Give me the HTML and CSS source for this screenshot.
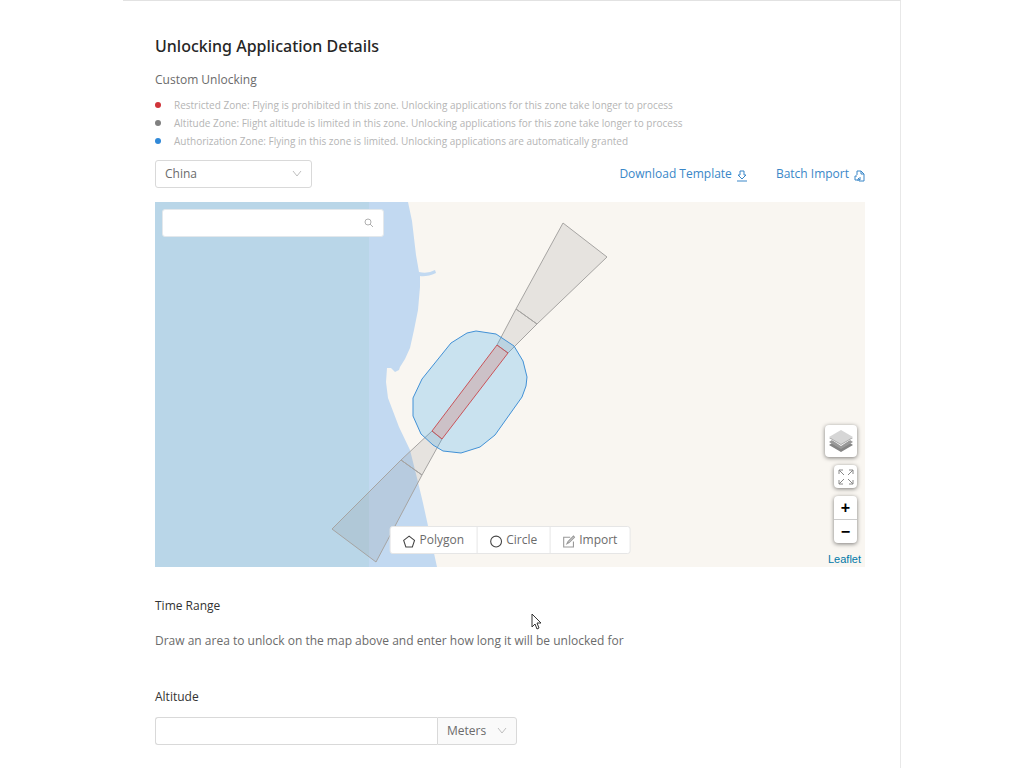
FILE: index.html
```html
<!DOCTYPE html>
<html lang="en">
<head>
  <meta charset="UTF-8" />
  <title>Unlocking Application Details</title>
  <link rel="stylesheet" href="styles.css">
</head>
<body>
  <main class="panel">
    <h1 class="title">Unlocking Application Details</h1>
    <h2 class="subtitle">Custom Unlocking</h2>

    <ul class="zones">
      <li class="zone restricted">Restricted Zone: Flying is prohibited in this zone. Unlocking applications for this zone take longer to process</li>
      <li class="zone altitude">Altitude Zone: Flight altitude is limited in this zone. Unlocking applications for this zone take longer to process</li>
      <li class="zone authorization">Authorization Zone: Flying in this zone is limited. Unlocking applications are automatically granted</li>
    </ul>

    <div class="toolbar">
      <div class="select-box country">
        <select aria-label="Country">
          <option>China</option>
        </select>
        <svg class="chevron" viewBox="0 0 10 8"><path d="M1 1l4 5 4-5" /></svg>
      </div>
      <div class="links">
        <a href="#">Download Template
          <svg class="link-icon" viewBox="0 0 12 12"><path d="M4 1h4v4h2L6 9 2 5h2zM1 11h10" /></svg>
        </a>
        <a href="#">Batch Import
          <svg class="link-icon" viewBox="0 0 12 12"><path d="M4 5V1h4l3 3v7H6M8 1v3h3M4 6H2v4h4M5 8l2 2M7 7v3H4" /></svg>
        </a>
      </div>
    </div>

    <div class="map">
      <svg class="map-canvas" viewBox="0 0 710 365" preserveAspectRatio="xMinYMin slice">
        <rect class="land" width="710" height="365" />
        <path class="shore" d="M0 0H253L257 19 261 53 264 70Q273 72 280 68L281 71Q272 75 265 74L265 85 263 108 259 128 255 146 250 157 245 165 244 168 240 170 236 166 232 166 231 180 233 196 244 225 255 248 262 276 268 301 282 365H0z" />
        <rect class="sea" width="214" height="365" />
        <g class="gray-zone">
          <path d="M408 21L452 55 382 122 361 107z" />
          <path d="M361 107L382 122 353 151 342 143z" />
          <path d="M277 229L287 237 267 273 246 258z" />
          <path d="M246 258L267 273 221 360 177 327z" />
        </g>
        <path class="blue-zone" d="M321 129L341 132 359 144 368 159 372 175 371 184 367 195 340 233 325 245 306 251 288 249 278 243 266 232 258 214 258 196 267 177 296 141 312 131z" />
        <path class="red-zone" d="M342 143L353 151 287 237 277 229z" />
      </svg>

      <div class="search">
        <input type="text" aria-label="Search location">
        <svg class="search-icon" viewBox="0 0 10 10"><circle cx="4" cy="4" r="3" /><path d="M6 6l3 3" /></svg>
      </div>

      <div class="draw-tools">
        <button type="button">
          <svg class="tool-icon" viewBox="0 0 12 12"><path d="M6 1l5 4-2 6H3L1 5z" /></svg>
          Polygon
        </button>
        <button type="button">
          <svg class="tool-icon" viewBox="0 0 12 12"><circle cx="6" cy="6" r="5" /></svg>
          Circle
        </button>
        <button type="button">
          <svg class="tool-icon muted" viewBox="0 0 12 12"><path d="M7 2H1v9h9V6M4 8l1-2 5-5 1 1-5 5z" /></svg>
          Import
        </button>
      </div>

      <div class="map-controls">
        <button type="button" class="control layers" aria-label="Layers">
          <svg viewBox="0 0 26 26">
            <path fill="#858585" d="M1 17l12 7 12-7-3-2-9 5-9-5z" />
            <path fill="#fff" d="M1 13l12 7 12-7-3-1-9 5-9-5z" />
            <path fill="#999" d="M1 14l12 7 12-7-3-2-9 5-9-5z" />
            <path fill="#fff" d="M1 10l12 8 12-8z" />
            <path fill="#aaa" d="M1 10l12 7 12-7-3-1-9 5-9-5z" />
            <path fill="#d6d6d6" d="M13 2l12 7-12 7L1 9z" />
          </svg>
        </button>
        <button type="button" class="control fullscreen" aria-label="Full screen">
          <svg viewBox="0 0 16 16"><path d="M6 6L1 1M1 5V1h4M10 6l5-5M11 1h4v4M6 10l-5 5M1 11v4h4M10 10l5 5M15 11v4h-4" /></svg>
        </button>
        <div class="control zoom">
          <button type="button">+</button>
          <button type="button">−</button>
        </div>
        <a class="leaflet" href="#">Leaflet</a>
      </div>
    </div>

    <section class="time-range">
      <h3 class="label">Time Range</h3>
      <p class="hint">Draw an area to unlock on the map above and enter how long it will be unlocked for</p>
      <svg class="cursor" viewBox="0 0 12 18"><path d="M1 1v13l3-3 2 5 2-1-2-5h4z" /></svg>
    </section>

    <section>
      <label class="label" for="altitude">Altitude</label>
      <div class="input-group">
        <input type="text" id="altitude">
        <div class="select-box unit">
          <select aria-label="Altitude unit">
            <option>Meters</option>
          </select>
          <svg class="chevron" viewBox="0 0 10 8"><path d="M1 1l4 5 4-5" /></svg>
        </div>
      </div>
    </section>
  </main>
</body>
</html>
```

FILE: styles.css
```css
* {
  box-sizing: border-box;
}

body {
  margin: 0;
  background-color: #fff;
  color: #6b6b6b;
  font-family: "Segoe UI", "Open Sans", sans-serif;
  font-size: 12px;
  line-height: 18px;
}

button, input, select {
  font: inherit;
  color: inherit;
}

svg {
  display: block;
  fill: none;
  stroke-width: 1;
}

.panel {
  max-width: 778px;
  min-height: 100vh;
  margin: 0 auto;
  padding: 33px 35px 22px 32px;
  border-top: 1px solid #e2e2e2;
  border-right: 1px solid #e8e8e8;
}

.title {
  margin: 0 0 13px;
  color: #262626;
  font-family: "Segoe UI", "Noto Sans", sans-serif;
  font-size: 16px;
  line-height: 24px;
  font-weight: 500;
}

.subtitle {
  margin: 0 0 7px;
  font-size: 12px;
  font-weight: 400;
}

.zones {
  margin: 0 0 10px;
  padding: 0;
  list-style: none;
  color: #b5b5b5;
  font-size: 10px;
}

.zone {
  display: flex;
  align-items: center;
  gap: 13px;
}

.zone::before {
  content: "";
  width: 6px;
  height: 6px;
  border-radius: 50%;
}

.restricted::before {
  background-color: #d0343a;
}

.altitude::before {
  background-color: #808080;
}

.authorization::before {
  background-color: #3089d8;
}

.toolbar {
  display: flex;
  align-items: center;
  justify-content: space-between;
  margin-bottom: 14px;
}

.select-box {
  position: relative;
  height: 28px;
}

.select-box select {
  width: 100%;
  height: 100%;
  padding: 0 9px;
  border: 1px solid #d9d9d9;
  border-radius: 3px;
  background-color: #fff;
  appearance: none;
}

.chevron {
  position: absolute;
  top: 10px;
  right: 10px;
  width: 10px;
  height: 8px;
  stroke: #bfbfbf;
  pointer-events: none;
}

.country {
  width: 157px;
}

.links {
  display: flex;
  gap: 28px;
}

.links a {
  display: flex;
  align-items: center;
  gap: 4px;
  color: #3a87c8;
  text-decoration: none;
}

.link-icon {
  width: 12px;
  height: 12px;
  margin-top: 3px;
  stroke: #3a87c8;
}

.map {
  position: relative;
  height: 365px;
  margin-bottom: 30px;
  overflow: hidden;
}

.map-canvas {
  width: 100%;
  height: 100%;
}

.land {
  fill: #f9f6f1;
}

.shore {
  fill: #c2d9f1;
}

.sea {
  fill: #b9d6e8;
}

.gray-zone {
  fill: rgba(128, 128, 128, 0.16);
  stroke: #a6a4a2;
}

.blue-zone {
  fill: rgba(50, 165, 235, 0.24);
  stroke: #4291d6;
}

.red-zone {
  fill: rgba(222, 67, 41, 0.2);
  stroke: #c9545a;
}

.search {
  position: absolute;
  top: 7px;
  left: 7px;
  width: 222px;
  height: 28px;
}

.search input {
  width: 100%;
  height: 100%;
  padding: 0 30px 0 9px;
  border: 1px solid #e3e8ec;
  border-radius: 3px;
  background-color: #fff;
}

.search-icon {
  position: absolute;
  top: 9px;
  right: 10px;
  width: 10px;
  height: 10px;
  stroke: #b0b0b0;
}

.draw-tools {
  position: absolute;
  left: 50%;
  bottom: 13px;
  display: flex;
  transform: translateX(-50%);
  border: 1px solid #e6e6e6;
  border-radius: 3px;
  background-color: #fff;
}

.draw-tools button {
  display: flex;
  align-items: center;
  gap: 4px;
  height: 26px;
  padding: 0 12px;
  border: none;
  border-right: 1px solid #e6e6e6;
  background: none;
}

.draw-tools button:last-child {
  border-right: none;
}

.tool-icon {
  width: 13px;
  height: 13px;
  margin-top: 2px;
  stroke: #444;
}

.muted {
  stroke: #999;
}

.map-controls {
  position: absolute;
  right: 4px;
  bottom: 0;
  display: flex;
  flex-direction: column;
  align-items: flex-end;
}

.control {
  display: flex;
  align-items: center;
  justify-content: center;
  width: 23px;
  margin: 0 4px 8px 0;
  padding: 0;
  border: none;
  border-radius: 4px;
  background-color: #fff;
  box-shadow: 0 1px 4px rgba(0, 0, 0, 0.5);
}

.layers {
  width: 32px;
  height: 32px;
}

.layers svg {
  width: 26px;
  height: 26px;
}

.fullscreen {
  height: 23px;
}

.fullscreen svg {
  width: 16px;
  height: 16px;
  stroke: #888;
}

.zoom {
  flex-direction: column;
}

.zoom button {
  width: 100%;
  height: 23px;
  padding: 0;
  border: none;
  background: none;
  color: #000;
  font: bold 16px/22px "Liberation Sans", sans-serif;
}

.zoom button:first-child {
  height: 24px;
  border-bottom: 1px solid #ccc;
}

.leaflet {
  color: #0078a8;
  font: 11px/16px "Liberation Sans", sans-serif;
  text-decoration: none;
}

.label {
  display: block;
  margin: 0;
  color: #333;
  font-size: 12px;
  font-weight: 400;
}

.time-range {
  position: relative;
  margin-bottom: 38px;
}

.hint {
  margin: 17px 0 0;
}

.cursor {
  position: absolute;
  top: 16px;
  left: 376px;
  width: 12px;
  height: 18px;
  fill: #fff;
  stroke: #333;
}

.input-group {
  display: flex;
  width: 362px;
  margin-top: 11px;
}

.input-group input {
  flex: 1;
  min-width: 0;
  height: 28px;
  padding: 0 9px;
  border: 1px solid #d9d9d9;
  border-right: none;
  border-radius: 3px 0 0 3px;
}

.unit {
  width: 80px;
}

.unit select {
  border-radius: 0 3px 3px 0;
  background-color: #fafafa;
}
```
